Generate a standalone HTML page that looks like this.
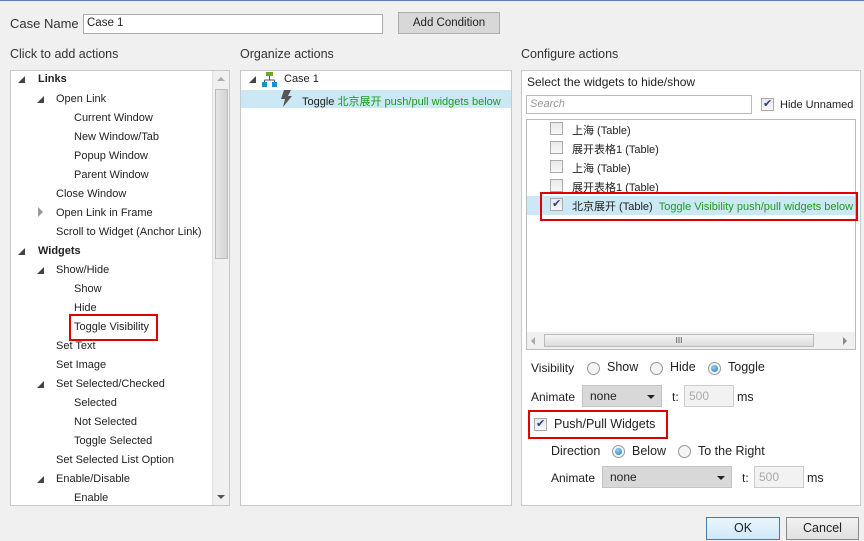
<!DOCTYPE html>
<html><head><meta charset="utf-8"><style>
*{box-sizing:border-box;margin:0;padding:0}
body{width:864px;height:541px;background:#f0f0f0;font-family:"Liberation Sans","Noto Sans CJK SC",sans-serif;font-size:11px;color:#222;position:relative;overflow:hidden;border-top:1px solid #5a7ab8}
.a{position:absolute;white-space:nowrap}
.lbl{font-size:12.5px;color:#333}
.panel{position:absolute;background:#fff;border:1px solid #c8c8c8}
.tri{position:absolute;width:0;height:0;border-left:7px solid transparent;border-bottom:7px solid #444}
.cb{position:absolute;width:13px;height:13px;border:1px solid #aaa;background:linear-gradient(#e8e8e8,#f8f8f8)}
.cb.on::after{content:"✔";position:absolute;left:1px;top:-2px;font-size:11px;color:#2a3a8a}
.rd{position:absolute;width:13px;height:13px;border:1px solid #999;border-radius:50%;background:#f4f4f4}
.rd.on::after{content:"";position:absolute;left:2px;top:2px;width:7px;height:7px;border-radius:50%;background:radial-gradient(circle at 40% 35%,#8fd3f5,#1a7ab8)}
.sel{position:absolute;background:#d8d8d8;border:1px solid #c4c4c4;font-size:12px;padding:3px 0 0 7px}
.sel::after{content:"";position:absolute;right:6px;top:9px;border-left:4px solid transparent;border-right:4px solid transparent;border-top:4px solid #222}
.inp{position:absolute;background:#f2f2f2;border:1px solid #ccc;color:#aaa;font-size:12px;padding:3px 0 0 4px}
.red{position:absolute;border:2px solid #e00000}
.g{color:#1f9a1f}
</style></head><body>
<div class="a lbl" style="left:10px;top:15px;font-size:13px">Case Name</div>
<div class="a" style="left:83px;top:13px;width:300px;height:20px;background:#fff;border:1px solid #aaa;padding:2px 3px;font-size:11.5px">Case 1</div>
<div class="a" style="left:398px;top:11px;width:102px;height:22px;background:#d8d8d8;border:1px solid #adadad;text-align:center;line-height:20px;font-size:11.5px">Add Condition</div>

<div class="a lbl" style="left:10px;top:46px">Click to add actions</div>
<div class="a lbl" style="left:240px;top:46px">Organize actions</div>
<div class="a lbl" style="left:521px;top:46px">Configure actions</div>

<div class="panel" style="left:10px;top:69px;width:220px;height:436px">
 <div class="a" style="left:201px;top:0;width:17px;height:434px;background:#f0f0f0;border-left:1px solid #e0e0e0">
  <div class="a" style="left:4px;top:6px;border-left:4px solid transparent;border-right:4px solid transparent;border-bottom:4px solid #aaa"></div>
  <div class="a" style="left:2px;top:18px;width:13px;height:170px;background:linear-gradient(90deg,#e6e6e6,#d4d4d4);border:1px solid #bbb"></div>
  <div class="a" style="left:4px;bottom:6px;border-left:4px solid transparent;border-right:4px solid transparent;border-top:4px solid #555"></div>
 </div>
</div>
<div class="tri" style="left:18px;top:75px"></div><div class="a" style="left:38px;top:72px;font-weight:bold">Links</div>
<div class="tri" style="left:37px;top:95px"></div><div class="a" style="left:56px;top:92px">Open Link</div>
<div class="a" style="left:74px;top:111px">Current Window</div>
<div class="a" style="left:74px;top:130px">New Window/Tab</div>
<div class="a" style="left:74px;top:149px">Popup Window</div>
<div class="a" style="left:74px;top:168px">Parent Window</div>
<div class="a" style="left:56px;top:187px">Close Window</div>
<div class="a" style="left:38px;top:206px;border-left:5px solid #999;border-top:5px solid transparent;border-bottom:5px solid transparent;width:0;height:0"></div><div class="a" style="left:56px;top:206px">Open Link in Frame</div>
<div class="a" style="left:56px;top:225px">Scroll to Widget (Anchor Link)</div>
<div class="tri" style="left:18px;top:247px"></div><div class="a" style="left:38px;top:244px;font-weight:bold">Widgets</div>
<div class="tri" style="left:37px;top:266px"></div><div class="a" style="left:56px;top:263px">Show/Hide</div>
<div class="a" style="left:74px;top:282px">Show</div>
<div class="a" style="left:74px;top:301px">Hide</div>
<div class="a" style="left:74px;top:320px">Toggle Visibility</div>
<div class="red" style="left:69px;top:313px;width:89px;height:27px"></div>
<div class="a" style="left:56px;top:339px">Set Text</div>
<div class="a" style="left:56px;top:358px">Set Image</div>
<div class="tri" style="left:37px;top:380px"></div><div class="a" style="left:56px;top:377px">Set Selected/Checked</div>
<div class="a" style="left:74px;top:396px">Selected</div>
<div class="a" style="left:74px;top:415px">Not Selected</div>
<div class="a" style="left:74px;top:434px">Toggle Selected</div>
<div class="a" style="left:56px;top:453px">Set Selected List Option</div>
<div class="tri" style="left:37px;top:475px"></div><div class="a" style="left:56px;top:472px">Enable/Disable</div>
<div class="a" style="left:74px;top:491px">Enable</div>

<div class="panel" style="left:240px;top:69px;width:272px;height:436px"></div>
<div class="tri" style="left:249px;top:75px"></div>
<svg class="a" style="left:262px;top:71px" width="15" height="15"><rect x="4" y="0" width="7" height="4" fill="#6aaa1e"/><path d="M7.5 4V8M2.5 8H12.5M2.5 8V10M12.5 8V10" stroke="#555" fill="none"/><rect x="0" y="10" width="5" height="5" fill="#1a8fd6"/><rect x="10" y="10" width="5" height="5" fill="#1a8fd6"/></svg>
<div class="a" style="left:284px;top:72px">Case 1</div>
<div class="a" style="left:241px;top:89px;width:270px;height:18px;background:#cce8f4"></div>
<svg class="a" style="left:280px;top:89px" width="14" height="17"><path d="M4 0H11L8 6H12L3 17L5 9H1Z" fill="#555"/></svg>
<div class="a" style="left:302px;top:92px">Toggle <span class="g">北京展开 push/pull widgets below</span></div>

<div class="panel" style="left:521px;top:69px;width:340px;height:436px"></div>
<div class="a" style="left:527px;top:74px;font-size:12px">Select the widgets to hide/show</div>
<div class="a" style="left:526px;top:94px;width:226px;height:19px;background:#fff;border:1px solid #bbb;color:#999;font-style:italic;padding:2px 3px">Search</div>
<div class="cb on" style="left:761px;top:97px"></div>
<div class="a" style="left:780px;top:98px">Hide Unnamed</div>
<div class="a" style="left:526px;top:118px;width:330px;height:231px;border:1px solid #bbb;background:#fff"></div>
<div class="cb" style="left:550px;top:121px"></div><div class="a" style="left:572px;top:121px">上海 (Table)</div>
<div class="cb" style="left:550px;top:140px"></div><div class="a" style="left:572px;top:140px">展开表格1 (Table)</div>
<div class="cb" style="left:550px;top:159px"></div><div class="a" style="left:572px;top:159px">上海 (Table)</div>
<div class="cb" style="left:550px;top:178px"></div><div class="a" style="left:572px;top:178px">展开表格1 (Table)</div>
<div class="a" style="left:527px;top:195px;width:328px;height:19px;background:#cce8f4"></div>
<div class="cb on" style="left:550px;top:197px"></div><div class="a" style="left:572px;top:197px">北京展开 (Table) <span class="g">&nbsp;Toggle Visibility push/pull widgets below</span></div>
<div class="red" style="left:540px;top:191px;width:318px;height:29px"></div>
<div class="a" style="left:527px;top:331px;width:328px;height:17px;background:#f0f0f0"></div>
<div class="a" style="left:544px;top:333px;width:270px;height:13px;background:linear-gradient(#f4f4f4,#dcdcdc);border:1px solid #bbb;text-align:center;font-size:8px;line-height:11px;color:#444">III</div>
<div class="a" style="left:531px;top:336px;border-top:4px solid transparent;border-bottom:4px solid transparent;border-right:4px solid #aaa"></div>
<div class="a" style="left:843px;top:336px;border-top:4px solid transparent;border-bottom:4px solid transparent;border-left:4px solid #888"></div>

<div class="a" style="left:531px;top:360px;font-size:12px">Visibility</div>
<div class="rd" style="left:587px;top:361px"></div><div class="a" style="left:607px;top:359px;font-size:12.5px">Show</div>
<div class="rd" style="left:650px;top:361px"></div><div class="a" style="left:670px;top:359px;font-size:12.5px">Hide</div>
<div class="rd on" style="left:708px;top:361px"></div><div class="a" style="left:728px;top:359px;font-size:12.5px">Toggle</div>
<div class="a" style="left:531px;top:389px;font-size:12px">Animate</div>
<div class="sel" style="left:582px;top:384px;width:80px;height:22px">none</div>
<div class="a" style="left:672px;top:389px;font-size:12px">t:</div>
<div class="inp" style="left:684px;top:384px;width:50px;height:22px">500</div>
<div class="a" style="left:737px;top:389px;font-size:12.5px">ms</div>
<div class="red" style="left:528px;top:409px;width:140px;height:29px"></div>
<div class="cb on" style="left:534px;top:417px"></div><div class="a" style="left:554px;top:416px;font-size:12.5px">Push/Pull Widgets</div>
<div class="a" style="left:551px;top:443px;font-size:12.5px">Direction</div>
<div class="rd on" style="left:612px;top:444px"></div><div class="a" style="left:632px;top:443px;font-size:12.5px">Below</div>
<div class="rd" style="left:678px;top:444px"></div><div class="a" style="left:698px;top:443px;font-size:12.5px">To the Right</div>
<div class="a" style="left:551px;top:470px;font-size:12px">Animate</div>
<div class="sel" style="left:602px;top:465px;width:130px;height:22px">none</div>
<div class="a" style="left:742px;top:470px;font-size:12px">t:</div>
<div class="inp" style="left:754px;top:465px;width:50px;height:22px">500</div>
<div class="a" style="left:807px;top:470px;font-size:12.5px">ms</div>

<div class="a" style="left:706px;top:516px;width:74px;height:23px;background:linear-gradient(#eaf6fd,#cfe9f8);border:1px solid #3c7fb1;text-align:center;line-height:21px;font-size:12.5px">OK</div>
<div class="a" style="left:786px;top:516px;width:73px;height:23px;background:linear-gradient(#f2f2f2,#e0e0e0);border:1px solid #8a8a8a;text-align:center;line-height:21px;font-size:12.5px">Cancel</div>
</body></html>
